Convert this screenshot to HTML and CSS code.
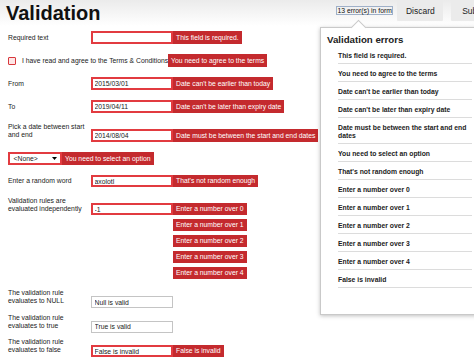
FILE: index.html
```html
<!DOCTYPE html>
<html lang="en">
<head>
<meta charset="utf-8">
<title>Validation</title>
<link rel="stylesheet" href="styles.css">
</head>
<body>
<div class="page">
  <header class="topbar">
    <h1 class="title">Validation</h1>
    <div class="actions">
      <a class="error-count" href="#">13 error(s) in form</a>
      <button class="btn btn-discard" type="button">Discard</button>
      <button class="btn btn-submit" type="button">Submit</button>
    </div>
  </header>

  <form class="form">
    <div class="row">
      <span class="label">Required text</span>
      <input class="input" type="text" value="">
      <span class="error">This field is required.</span>
    </div>

    <div class="row">
      <input class="check" type="checkbox">
      <span class="check-label">I have read and agree to the Terms &amp; Conditions</span>
      <span class="error">You need to agree to the terms</span>
    </div>

    <div class="row">
      <span class="label">From</span>
      <input class="input" type="text" value="2015/03/01">
      <span class="error">Date can't be earlier than today</span>
    </div>

    <div class="row">
      <span class="label">To</span>
      <input class="input" type="text" value="2019/04/11">
      <span class="error">Date can't be later than expiry date</span>
    </div>

    <div class="row tall">
      <span class="label">Pick a date between start and end</span>
      <input class="input" type="text" value="2014/08/04">
      <span class="error">Date must be between the start and end dates</span>
    </div>

    <div class="row">
      <div class="select">
        <span>&lt;None&gt;</span>
        <svg class="caret" width="5" height="3" viewBox="0 0 5 3"><path d="M0 0H5L2.5 3Z" fill="#000"/></svg>
      </div>
      <span class="error">You need to select an option</span>
    </div>

    <div class="row">
      <span class="label">Enter a random word</span>
      <input class="input input-short" type="text" value="axolotl">
      <span class="error error-short">That's not random enough</span>
    </div>

    <div class="row tall">
      <span class="label">Validation rules are evaluated independently</span>
      <input class="input input-short" type="text" value="-1">
      <div class="stack">
        <span class="error">Enter a number over 0</span>
        <span class="error">Enter a number over 1</span>
        <span class="error">Enter a number over 2</span>
        <span class="error">Enter a number over 3</span>
        <span class="error">Enter a number over 4</span>
      </div>
    </div>

    <div class="group">
      <div class="row tall">
        <span class="label">The validation rule evaluates to NULL</span>
        <input class="input valid" type="text" value="Null is valid">
      </div>
      <div class="row tall">
        <span class="label">The validation rule evaluates to true</span>
        <input class="input valid" type="text" value="True is valid">
      </div>
      <div class="row tall">
        <span class="label">The validation rule evaluates to false</span>
        <input class="input" type="text" value="False is invalid">
        <span class="error">False is invalid</span>
      </div>
    </div>
  </form>

  <div class="popover">
    <h2 class="popover-title">Validation errors</h2>
    <ul class="popover-list">
      <li>This field is required.</li>
      <li>You need to agree to the terms</li>
      <li>Date can't be earlier than today</li>
      <li>Date can't be later than expiry date</li>
      <li>Date must be between the start and end dates</li>
      <li>You need to select an option</li>
      <li>That's not random enough</li>
      <li>Enter a number over 0</li>
      <li>Enter a number over 1</li>
      <li>Enter a number over 2</li>
      <li>Enter a number over 3</li>
      <li>Enter a number over 4</li>
      <li>False is invalid</li>
    </ul>
  </div>
</div>
</body>
</html>
```

FILE: styles.css
```css
html, body {
  margin: 0;
  padding: 0;
  overflow: hidden;
  background: #fff;
}

body {
  font-family: "Liberation Sans", Arial, sans-serif;
  font-size: 6.8px;
  color: #222;
}

.page {
  position: relative;
  width: 500px;
  height: 363px;
}

/* Header */
.topbar {
  display: flex;
  height: 26px;
  background: linear-gradient(#ebebeb, #ffffff);
}

.title {
  flex: 0 0 336px;
  box-sizing: border-box;
  margin: 0;
  padding: 3px 0 0 6px;
  font-size: 20px;
  line-height: 20px;
  font-weight: bold;
  color: #111;
}

.actions {
  display: flex;
  align-items: center;
  height: 21px;
}

.error-count {
  border: 1px solid #9fb0c8;
  line-height: 7px;
  padding: 0 0.5px;
  color: #111;
  text-decoration: none;
}

.btn {
  height: 21px;
  padding: 0 8.5px;
  border: 0;
  border-radius: 1px;
  background: #ebebeb;
  font-family: inherit;
  font-size: 8.5px;
  color: #222;
}

.btn-discard {
  margin-left: 4px;
}

.btn-submit {
  margin-left: 8px;
  padding-left: 11px;
}

/* Form */
.form {
  display: flex;
  flex-direction: column;
  gap: 10px;
  padding: 5px 0 0 8px;
}

.row {
  display: flex;
  align-items: center;
}

.row.tall {
  align-items: flex-start;
}

.label {
  flex: none;
  width: 83px;
  line-height: 8px;
}

.input {
  flex: none;
  box-sizing: border-box;
  width: 82px;
  height: 13px;
  margin: 0;
  padding: 0 0 0 1.5px;
  border: 2px solid #e23b40;
  background: #fff;
  font-family: inherit;
  font-size: 6.8px;
  color: #222;
  outline: none;
}

.input-short {
  height: 12px;
}

.tall .input,
.tall > .error {
  margin-top: 6px;
}

.input.valid {
  border: 1px solid #c4c4c4;
  padding-left: 2.5px;
}

.error {
  flex: none;
  height: 13px;
  line-height: 13px;
  padding: 0 3px;
  background: #c42a2e;
  color: #fff;
  white-space: nowrap;
}

.error-short {
  height: 12px;
  line-height: 12px;
}

.check {
  -webkit-appearance: none;
  appearance: none;
  flex: none;
  box-sizing: border-box;
  width: 8px;
  height: 8px;
  margin: 0;
  border: 1.5px solid #d8373c;
  border-radius: 1px;
  background: #fde6e6;
}

.check-label {
  margin-left: 6px;
  white-space: nowrap;
}

.select {
  flex: none;
  box-sizing: border-box;
  display: flex;
  align-items: center;
  justify-content: space-between;
  width: 54px;
  height: 13px;
  padding: 0 3px 0 3.5px;
  border: 2px solid #e23b40;
  background: #fff;
}

.caret {
  display: block;
}

.stack {
  display: flex;
  flex-direction: column;
  gap: 4px;
  margin-top: 6px;
}

.stack .error {
  height: 12px;
  line-height: 12px;
}

.group {
  display: flex;
  flex-direction: column;
  gap: 5.5px;
}

.group .input {
  height: 12px;
  margin-top: 7px;
}

.group .row > .error {
  height: 12px;
  line-height: 12px;
  margin-top: 7px;
}

/* Popover */
.popover {
  position: absolute;
  left: 320px;
  top: 27px;
  box-sizing: border-box;
  width: 172px;
  height: 288px;
  padding: 6.3px 0 0 6px;
  border: 1px solid #c9c9c9;
  background: #fff;
  box-shadow: 0 1px 4px rgba(0, 0, 0, 0.25);
}

.popover::before {
  content: "";
  position: absolute;
  left: 32px;
  top: -6px;
  width: 10px;
  height: 10px;
  background: #fff;
  border-top: 1px solid #c9c9c9;
  border-left: 1px solid #c9c9c9;
  transform: rotate(45deg);
}

.popover-title {
  margin: 0;
  font-size: 9.7px;
  line-height: 12px;
  font-weight: bold;
  color: #222;
}

.popover-list {
  list-style: none;
  margin: 0 0 0 11px;
  padding: 0;
  width: 134px;
}

.popover-list li {
  padding: 5.5px 0 3.5px;
  line-height: 8px;
  border-bottom: 1px solid #dcdcdc;
  font-weight: bold;
  color: #222;
}
```
